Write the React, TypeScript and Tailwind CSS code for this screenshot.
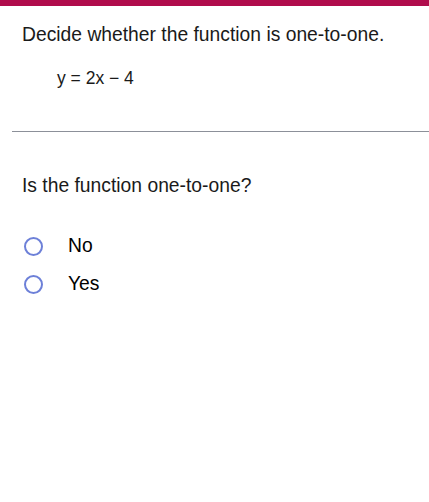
export default function App() {
  const options = ["No", "Yes"];
  return (
    <div className="w-[429px] h-[502px] bg-white text-[#1a1a1a]" style={{ fontFamily: '"Liberation Sans", Arial, sans-serif' }}>
      <div className="h-[6px] bg-[#b00c4c]" />
      <div className="pl-[22px] pt-[18px]">
        <p className="text-[19.3px] leading-[22px]">Decide whether the function is one-to-one.</p>
        <p className="mt-[22px] pl-[35px] text-[17.5px] leading-[20px]">y = 2x − 4</p>
      </div>
      <div className="ml-[12px] mt-[43px] h-px bg-[#8c9099]" />
      <p className="pl-[22px] mt-[43px] text-[19.3px] leading-[22px]">Is the function one-to-one?</p>
      <div className="mt-[39px] flex flex-col gap-[18px] pl-[24px]">
        {options.map((o) => (
          <label key={o} className="flex items-center h-[20px]">
            <span className="w-[19px] h-[19px] rounded-full border-2 border-[#6d80d8] bg-white" />
            <span className="ml-[25px] text-[19.3px] leading-[20px] text-black">{o}</span>
          </label>
        ))}
      </div>
    </div>
  );
}
